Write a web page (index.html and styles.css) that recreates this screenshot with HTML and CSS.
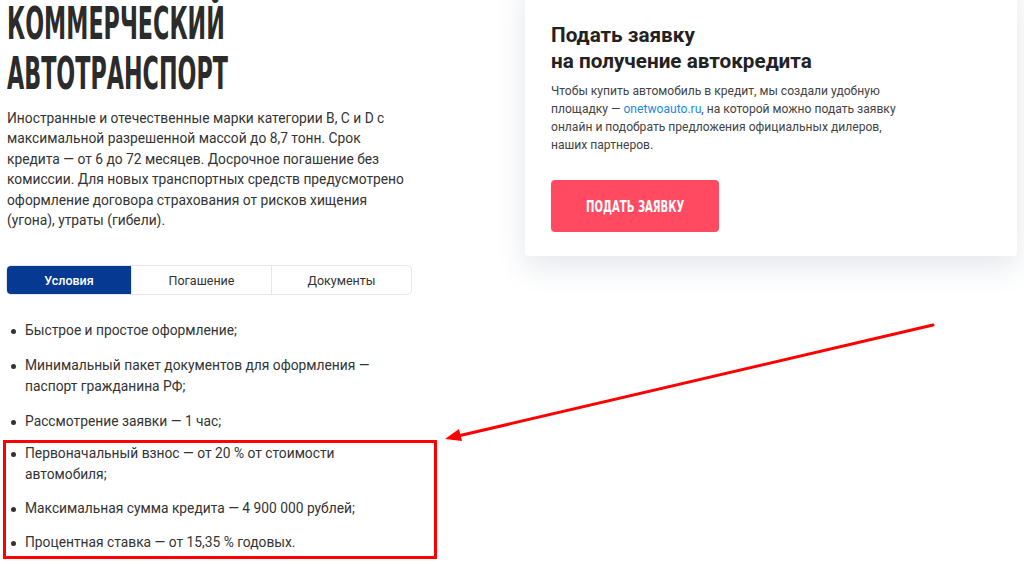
FILE: index.html
```html
<!DOCTYPE html>
<html lang="ru">
<head>
    <meta charset="UTF-8">
    <meta name="viewport" content="width=device-width, initial-scale=1.0">
    <title>Коммерческий автотранспорт</title>

    <link rel="stylesheet" href="styles.css">

</head>

<body>

    <div class="page">

        <div class="left">

            <h1 class="title">Коммерческий<br>автотранспорт</h1>

            <p class="lead">
                Иностранные и отечественные марки категории B, C и D с максимальной разрешенной массой до 8,7 тонн. Срок кредита — от 6 до 72 месяцев. Досрочное погашение без комиссии. Для новых транспортных средств предусмотрено оформление договора страхования от рисков хищения (угона), утраты (гибели).
            </p>

            <div class="tabs">
                <div class="tab active">Условия</div>
                <div class="tab">Погашение</div>
                <div class="tab">Документы</div>
            </div>

            <ul class="terms">
                <li>Быстрое и простое оформление;</li>
                <li>Минимальный пакет документов для оформления — паспорт гражданина РФ;</li>
                <li>Рассмотрение заявки — 1 час;</li>
            </ul>

            <div class="highlight">
                <ul class="terms">
                    <li>Первоначальный взнос — от 20 % от стоимости автомобиля;</li>
                    <li>Максимальная сумма кредита — 4 900 000 рублей;</li>
                    <li>Процентная ставка — от 15,35 % годовых.</li>
                </ul>
            </div>

        </div>

        <aside class="card">
            <h2>Подать заявку<br>на получение автокредита</h2>
            <p>
                Чтобы купить автомобиль в кредит, мы создали удобную площадку — <a href="#">onetwoauto.ru</a>, на которой можно подать заявку онлайн и подобрать предложения официальных дилеров, наших партнеров.
            </p>
            <a href="#" class="btn"><span>Подать заявку</span></a>
        </aside>

        <!-- annotation arrow -->
        <svg class="arrow" width="1024" height="564" viewBox="0 0 1024 564">
            <line x1="933" y1="325" x2="458" y2="436" stroke="#ff0000" stroke-width="3" stroke-linecap="round"/>
            <polygon points="445,439 459,429 462,441" fill="#ff0000"/>
        </svg>

    </div>

</body>

</html>
```

FILE: styles.css
```css
*, html {
    box-sizing: border-box;
    margin: 0;
    padding: 0;
}

body {
    font-family: Roboto, "Noto Sans", sans-serif;
    color: #333;
    background: #fff;
    overflow: hidden;
}

.page {
    position: relative;
    display: flex;
    align-items: flex-start;
    gap: 113px;
    width: 1024px;
    height: 564px;
    padding-left: 7px;
}

.left {
    width: 405px;
    flex-shrink: 0;
}

.title {
    margin-top: -1px;
    font-family: "DejaVu Sans Condensed", "DejaVu Sans", sans-serif;
    font-stretch: condensed;
    font-weight: bold;
    font-size: 44px;
    line-height: 50px;
    text-transform: uppercase;
    color: #2b2b2b;
    transform: scaleX(0.562);
    transform-origin: left top;
    white-space: nowrap;
}

.lead {
    margin-top: 9px;
    font-size: 13.8px;
    line-height: 20.4px;
    color: #333;
}

.tabs {
    display: flex;
    margin-top: 35px;
    margin-left: -1px;
    width: 406px;
    height: 30px;
    border: 1px solid #e3e8ef;
    border-radius: 5px;
    overflow: hidden;
}

.tab {
    display: flex;
    align-items: center;
    justify-content: center;
    width: 140px;
    font-size: 12.5px;
    color: #333;
    border-left: 1px solid #e3e8ef;
}

.tab:first-child {
    width: 124px;
    border-left: 0;
}

.tab.active {
    background: #063a92;
    color: #fff;
    font-weight: 500;
}

.terms {
    list-style: none;
    margin-top: 25px;
    font-size: 13.8px;
    line-height: 21px;
}

.terms li {
    position: relative;
    padding-left: 18px;
    margin-bottom: 14px;
}

.terms li::before {
    content: "";
    position: absolute;
    left: 4px;
    top: 9px;
    width: 5px;
    height: 5px;
    border-radius: 50%;
    background: #333;
}

.highlight {
    margin: -6px 0 0 -4px;
    width: 434px;
    height: 119px;
    border: 3px solid #ff0000;
    padding: 0 0 0 1px;
}

.highlight .terms {
    margin-top: 0;
    width: 400px;
}

.highlight .terms li {
    margin-bottom: 13px;
}

.card {
    margin-top: -20px;
    width: 492px;
    height: 276px;
    background: #fff;
    border-radius: 4px;
    box-shadow: 0 10px 30px rgba(40, 60, 90, 0.13);
    padding: 42px 26px 0;
}

.card h2 {
    font-size: 20.7px;
    line-height: 26px;
    font-weight: 700;
    color: #222;
}

.card p {
    margin-top: 8px;
    font-size: 12.1px;
    line-height: 18px;
    color: #444;
    width: 360px;
}

.card p a {
    color: #1e88e5;
    text-decoration: none;
}

.btn {
    display: flex;
    align-items: center;
    justify-content: center;
    margin-top: 26px;
    width: 168px;
    height: 52px;
    border-radius: 4px;
    background: #ff4a61;
    color: #fff;
    text-decoration: none;
    text-transform: uppercase;
    font-family: "DejaVu Sans Condensed", "DejaVu Sans", sans-serif;
    font-weight: bold;
    font-size: 16px;
}

.btn span {
    display: inline-block;
    transform: scaleX(0.7);
    white-space: nowrap;
}

.arrow {
    position: absolute;
    left: 0;
    top: 0;
    pointer-events: none;
}
```
